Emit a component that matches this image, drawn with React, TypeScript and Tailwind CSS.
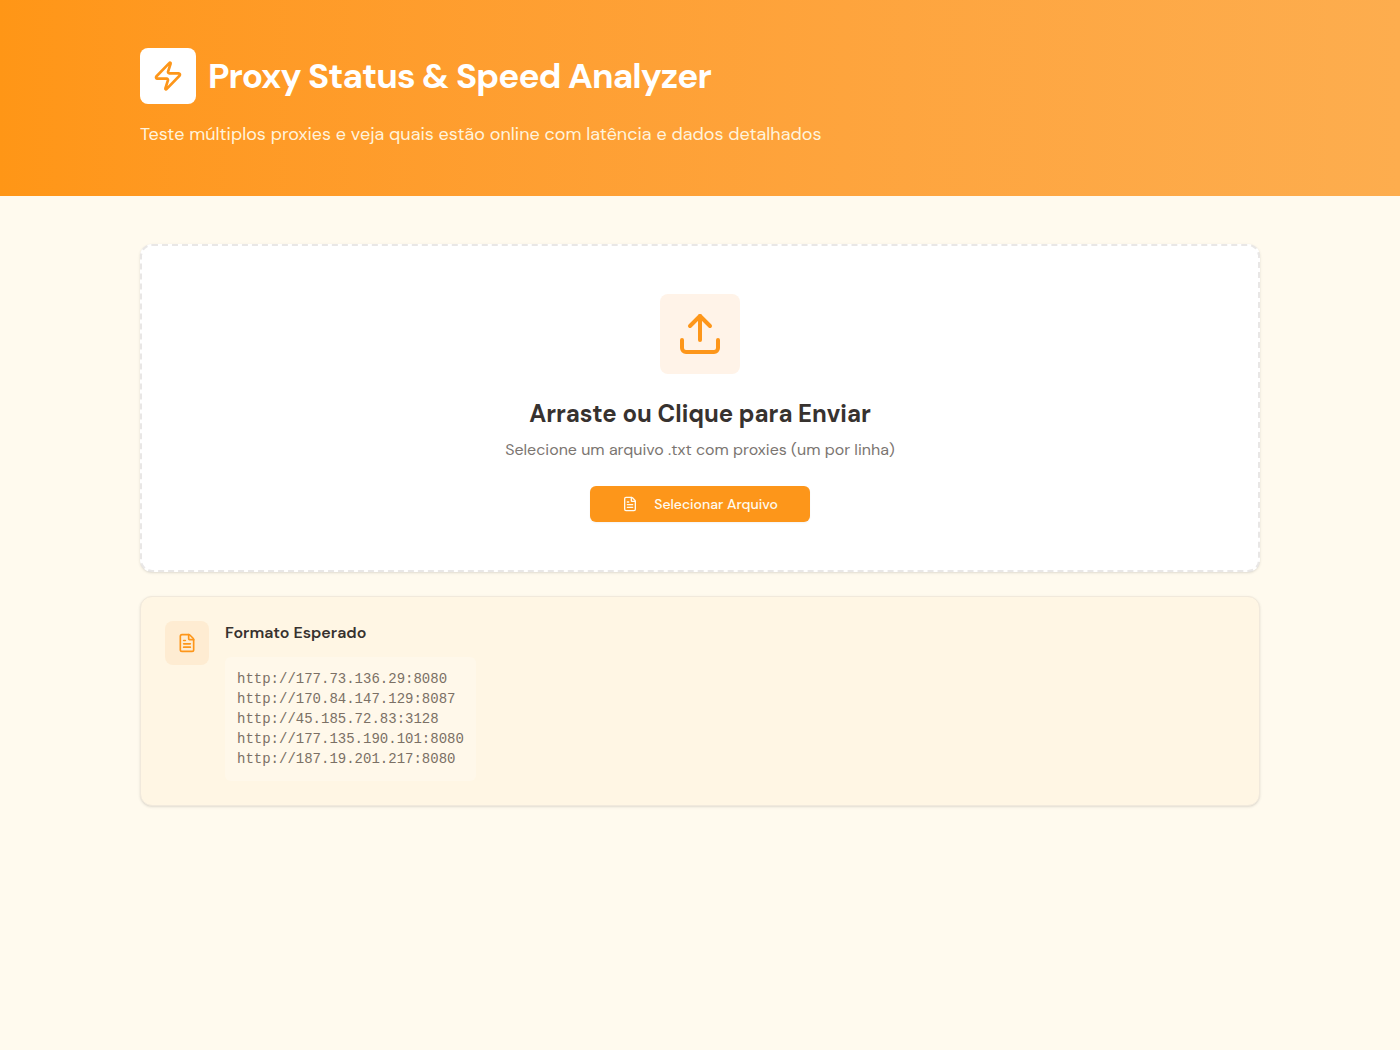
import { useRef } from "react";
import { FileText, Upload, Zap } from "lucide-react";

const examples = [
  "http://177.73.136.29:8080",
  "http://170.84.147.129:8087",
  "http://45.185.72.83:3128",
  "http://177.135.190.101:8080",
  "http://187.19.201.217:8080",
];

function Header() {
  return (
    <header className="bg-linear-to-r from-[#ff9616] to-[#fdad4e] py-12">
      <div className="mx-auto max-w-6xl px-4">
        <div className="mb-4 flex items-center gap-3">
          <div className="rounded-lg bg-white p-3">
            <Zap className="size-8 text-[#fd961a]" />
          </div>
          <h1 className="text-[35px] leading-10 font-bold tracking-tight text-white">
            Proxy Status &amp; Speed Analyzer
          </h1>
        </div>
        <p className="text-lg leading-7 text-[#fff3dc]">
          Teste múltiplos proxies e veja quais estão online com latência e dados detalhados
        </p>
      </div>
    </header>
  );
}

function UploadCard() {
  const input = useRef<HTMLInputElement>(null);
  return (
    <section className="flex flex-col items-center rounded-xl border-2 border-dashed border-[#e9e7e6] bg-white p-12 text-center shadow-sm">
      <div className="mb-6 rounded-lg bg-[#fff3e8] p-4">
        <Upload className="size-12 text-[#fd961a]" />
      </div>
      <h2 className="mb-2 text-2xl font-bold text-[#37322f]">Arraste ou Clique para Enviar</h2>
      <p className="mb-6 text-base text-[#7b7571]">
        Selecione um arquivo .txt com proxies (um por linha)
      </p>
      <input ref={input} type="file" accept=".txt" aria-label="Arquivo de proxies" className="hidden" />
      <button
        type="button"
        onClick={() => input.current?.click()}
        className="flex h-9 items-center gap-4 rounded-md bg-[#fd961a] px-8 text-sm font-medium text-[#fffaee] shadow-xs"
      >
        <FileText className="size-4" />
        Selecionar Arquivo
      </button>
    </section>
  );
}

function FormatCard() {
  return (
    <section className="flex items-start gap-4 rounded-xl border border-[#f1e9dc] bg-[#fff6e4] p-6 shadow-sm">
      <div className="rounded-lg bg-[#feecd2] p-3">
        <FileText className="size-5 text-[#fd961a]" />
      </div>
      <div>
        <h3 className="mb-3 text-base font-semibold text-[#37322f]">Formato Esperado</h3>
        <pre className="rounded-md bg-[#fff8ea] p-3 font-['Liberation_Mono',monospace] text-sm leading-5 text-[#7b7065]">
          {examples.join("\n")}
        </pre>
      </div>
    </section>
  );
}

export default function App() {
  return (
    <div className="min-h-screen bg-[#fffaee] font-['DM_Sans',Inter,sans-serif]">
      <Header />
      <main className="mx-auto flex max-w-6xl flex-col gap-6 px-4 py-12">
        <UploadCard />
        <FormatCard />
      </main>
    </div>
  );
}
